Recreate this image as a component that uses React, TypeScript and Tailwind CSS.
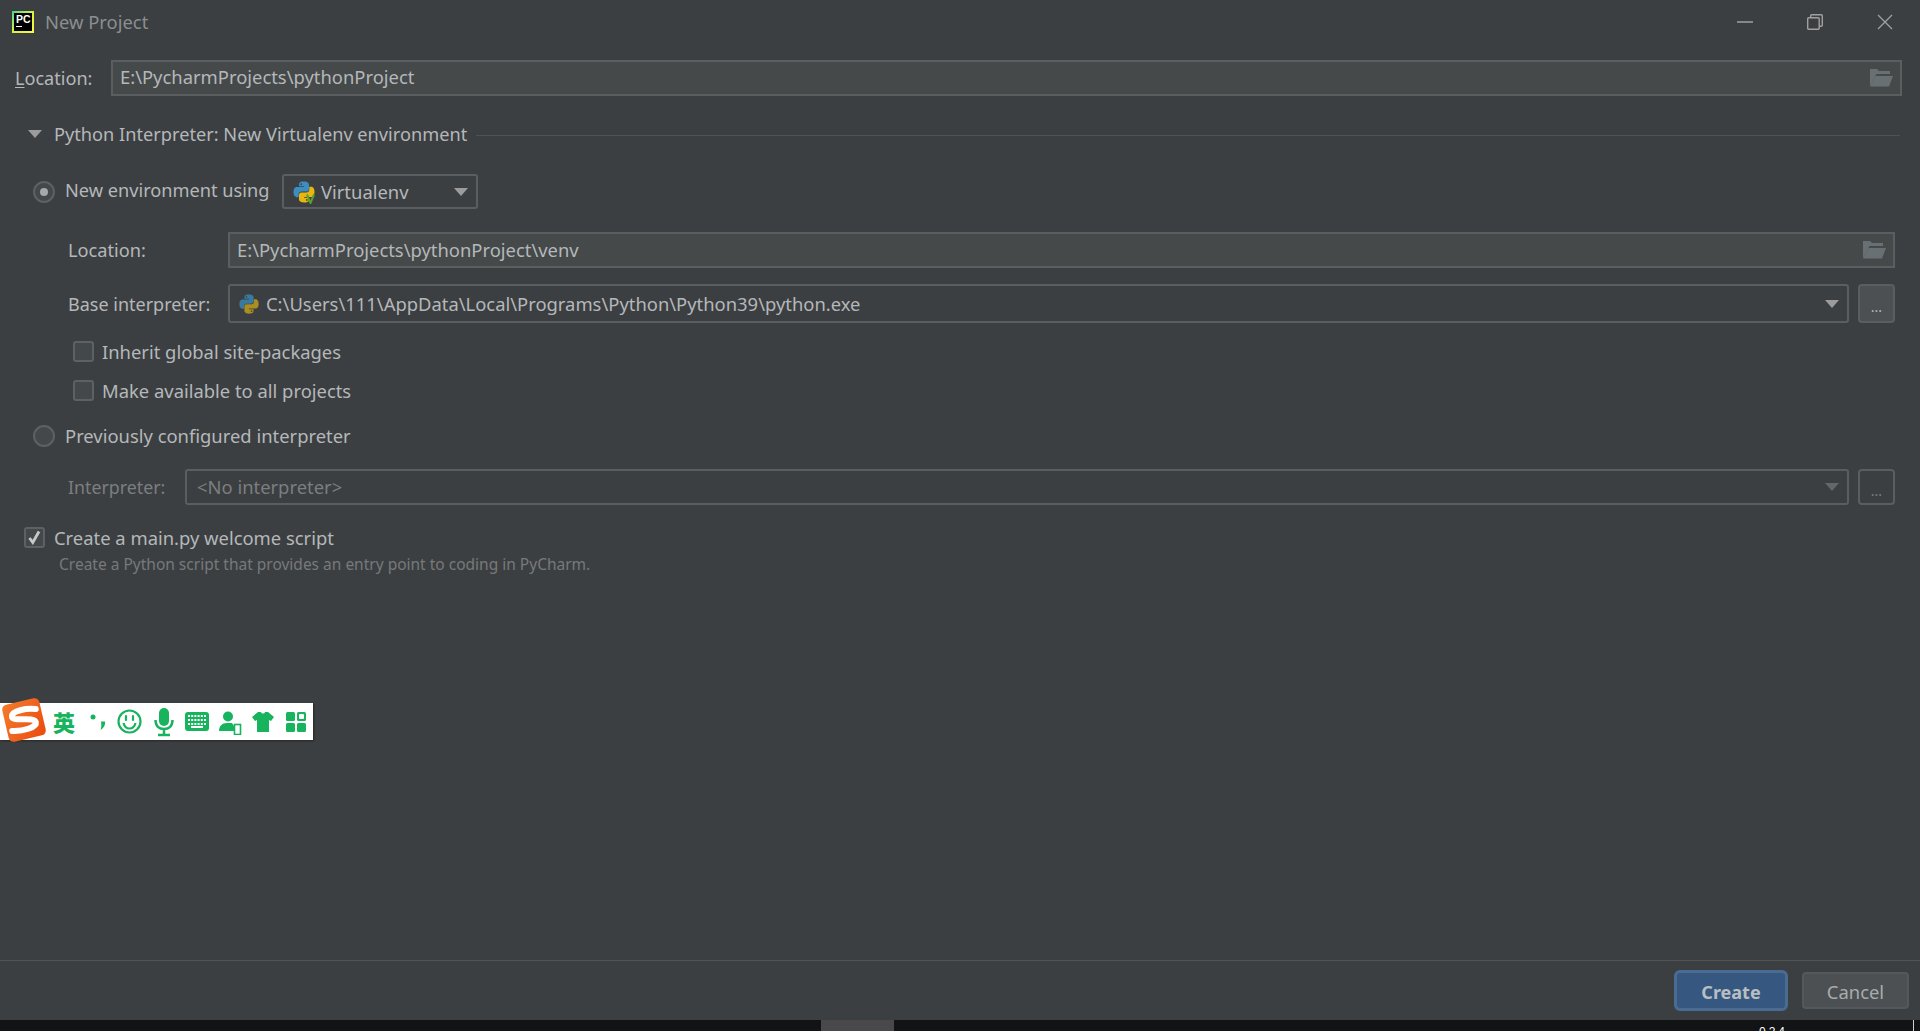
import React from "react";

const FONT = "font-['Noto_Sans','Open_Sans',sans-serif]";

function Folder() {
  return (
    <svg width="23" height="18" viewBox="0 0 23 18" className="shrink-0">
      <path d="M0 0h7l2 2h11v3H6.500L2 14 0 17z" fill="#687074" />
      <path d="M5.500 7H23l-4 10.500H0z" fill="#687074" />
    </svg>
  );
}

function Arrow({ color = "#9c9c9c" }: { color?: string }) {
  return (
    <svg width="14" height="8" viewBox="0 0 14 8" className="shrink-0">
      <path d="M0 0h14L7 8z" fill={color} />
    </svg>
  );
}

function PyIcon({ size, blue, yellow, v }: { size: number; blue: string; yellow: string; v?: boolean }) {
  const d =
    "M11.900 1.500C6.800 1.500 7.100 3.800 7.100 3.800v2.500h4.900V7H5.200S1.500 6.600 1.500 12s3.300 5.200 3.300 5.200h1.900v-2.600s-.1-3 2.800-3h4.800s2.700 0 2.700-2.600V4.400S17 1.500 11.900 1.500zM9.200 3.200a.9.9 0 110 1.800.9.9 0 010-1.800z";
  return (
    <svg width={size} height={size} viewBox="0 0 24 24" className="shrink-0">
      <path d={d} fill={blue} fillRule="evenodd" />
      <path d={d} fill={yellow} fillRule="evenodd" transform="rotate(180 12 12)" />
      {v && <path d="M15 14.500l3.500 8.500 3.500-8.500" fill="none" stroke="#5aa02c" strokeWidth="2" />}
    </svg>
  );
}

function CheckBox({ checked }: { checked?: boolean }) {
  return (
    <span className="flex h-[21px] w-[21px] shrink-0 items-center justify-center rounded-[3px] border-2 border-[#5d6163] bg-[#43494a]">
      {checked && (
        <svg width="15" height="15" viewBox="0 0 15 15">
          <path d="M2.500 8l3.300 4.500L12 1.500" fill="none" stroke="#c8c8c8" strokeWidth="2.800" />
        </svg>
      )}
    </span>
  );
}

function Radio({ on }: { on?: boolean }) {
  return (
    <span className="flex h-[22px] w-[22px] shrink-0 items-center justify-center rounded-full border-2 border-[#5d6163] bg-[#43494a]">
      {on && <span className="h-[8px] w-[8px] rounded-full bg-[#a8a8a8]" />}
    </span>
  );
}

function Sogou() {
  const g = "#17b35d";
  return (
    <div className="absolute left-0 top-[703px] flex h-[37px] w-[313px] items-center bg-white shadow-[1px_1px_2px_rgba(0,0,0,0.4)]">
      <div className="absolute left-[5px] top-[-2px] flex h-[38px] w-[38px] rotate-[-13deg] items-center justify-center rounded-[5px] bg-gradient-to-br from-[#f47a2c] to-[#ea4a0c]">
        <svg width="34" height="28" viewBox="0 0 34 28">
          <path d="M31 6C22 3 7 2 6 8c-1 6 22 4 22 11 0 5-15 6-25 3" fill="none" stroke="#fff" strokeWidth="6" strokeLinecap="round" />
        </svg>
      </div>
      <span className="absolute left-[53px] top-[3px] font-['Noto_Sans_CJK_SC',sans-serif] text-[22px] font-black leading-[30px] text-[#17b35d]">英</span>
      <svg className="absolute left-[90px] top-[10px]" width="18" height="18" viewBox="0 0 18 18">
        <circle cx="3" cy="4" r="2.500" fill={g} />
        <path d="M11 8.500h4c.5 3.500-1 6.500-4.500 8.500 1-2.500 1-5 .5-8.500z" fill={g} />
      </svg>
      <svg className="absolute left-[117px] top-[6px]" width="25" height="25" viewBox="0 0 25 25" fill="none" stroke={g} strokeWidth="2.200">
        <circle cx="12.500" cy="12.500" r="11" />
        <path d="M9 7v4M16 7v4" strokeLinecap="round" />
        <path d="M6.500 14c1 4 3 5.500 6 5.500s5-1.500 6-5.500" />
      </svg>
      <svg className="absolute left-[154px] top-[4px]" width="20" height="30" viewBox="0 0 20 30" fill="none" stroke={g}>
        <rect x="5" y="1" width="10" height="18" rx="5" fill={g} stroke="none" />
        <path d="M1.500 13c0 6 3.500 9 8.500 9s8.500-3 8.500-9M10 22v6M4 28h12" strokeWidth="2.500" />
      </svg>
      <svg className="absolute left-[185px] top-[9px]" width="24" height="19" viewBox="0 0 24 19">
        <rect width="24" height="19" rx="3" fill={g} />
        <path d="M3 4h18M3 8h18M3 12h18" stroke="#fff" strokeWidth="2" strokeDasharray="2 1.200" />
        <rect x="6" y="14" width="12" height="2" fill="#fff" />
      </svg>
      <svg className="absolute left-[219px] top-[8px]" width="24" height="24" viewBox="0 0 24 24">
        <circle cx="9" cy="5.500" r="5" fill={g} />
        <path d="M0 20c0-5 3-8 8-8h5l2 3v5z" fill={g} />
        <rect x="15.500" y="13.500" width="6" height="10" fill="#fff" stroke={g} strokeWidth="1.600" />
      </svg>
      <svg className="absolute left-[252px] top-[9px]" width="22" height="20" viewBox="0 0 22 20">
        <path d="M6 0h3c.5 2 3.500 2 4 0h3l6 5-3 4-2-1v12H5V8L3 9 0 5z" fill={g} />
      </svg>
      <svg className="absolute left-[286px] top-[9px]" width="20" height="20" viewBox="0 0 20 20">
        <rect width="9" height="9" rx="1.500" fill={g} />
        <rect x="11" width="9" height="9" rx="1.500" fill={g} />
        <rect x="13" y="2" width="5" height="5" rx="1" fill="#fff" />
        <rect y="11" width="9" height="9" rx="1.500" fill={g} />
        <rect x="11" y="11" width="9" height="9" rx="1.500" fill={g} />
      </svg>
    </div>
  );
}

export default function App() {
  return (
    <div className={`relative flex h-[1031px] w-[1920px] flex-col overflow-hidden bg-[#3c3f41] text-[18.4px] text-[#b4b8ba] ${FONT}`}>
      {/* title bar */}
      <div className="flex h-[44px] shrink-0 items-center pl-[12px] pr-[27px]">
        <div className="h-[22px] w-[22px] shrink-0 bg-gradient-to-br from-[#21d789] via-[#d8f03a] to-[#fcf84a] p-[2px]">
          <div className="flex h-full w-full flex-col bg-black px-[2px] pt-[1px]">
            <span className="font-['Liberation_Sans',sans-serif] text-[10.500px] font-bold leading-[10px] text-white">PC</span>
            <span className="mt-[2px] h-[1px] w-[6px] bg-white" />
          </div>
        </div>
        <span className="ml-[11px] text-[#8b8e90]">New Project</span>
        <div className="ml-auto flex items-center gap-[54px] pb-[1px]">
          <svg width="16" height="16" viewBox="0 0 16 16"><path d="M0 8h16" stroke="#a0a0a0" strokeWidth="1.500" /></svg>
          <svg width="16" height="16" viewBox="0 0 16 16" fill="none" stroke="#a0a0a0" strokeWidth="1.400"><rect x=".7" y="3.700" width="11.500" height="11.500" rx="1" /><path d="M3.700 3.500V1.700a1 1 0 011-1h9.600a1 1 0 011 1v9.600a1 1 0 01-1 1h-2" /></svg>
          <svg width="16" height="16" viewBox="0 0 16 16"><path d="M1 1l14 14M15 1L1 15" stroke="#a0a0a0" strokeWidth="1.300" /></svg>
        </div>
      </div>

      {/* location */}
      <div className="mt-[16px] flex h-[36px] shrink-0 items-center pl-[15px] pr-[18px]">
        <span className="w-[96px] shrink-0 pt-[2px] text-[18.100px]"><span className="underline underline-offset-2">L</span>ocation:</span>
        <div className="flex h-full flex-1 items-center justify-between border-2 border-[#5b5e60] bg-[#45494a] pl-[7px] pr-[7px]">
          <span className="pb-[2px]">E:\PycharmProjects\pythonProject</span>
          <Folder />
        </div>
      </div>

      {/* section */}
      <div className="mt-[23px] flex h-[30px] shrink-0 items-center pl-[28px] pr-[20px]">
        <Arrow />
        <span className="ml-[12px] shrink-0 pt-[1px] text-[18.200px]">Python Interpreter: New Virtualenv environment</span>
        <div className="ml-[9px] mt-[2px] h-px flex-1 bg-[#505355]" />
      </div>

      {/* new env */}
      <div className="mt-[25px] flex h-[35px] shrink-0 items-center pl-[33px]">
        <Radio on />
        <span className="ml-[10px] w-[217px] shrink-0 pb-[1px] text-[18.200px]">New environment using</span>
        <div className="flex h-full w-[196px] items-center rounded-[3px] border-2 border-[#5b5e60] pl-[8px] pr-[8px]">
          <PyIcon size={24} blue="#3d8ec0" yellow="#e8b610" v />
          <span className="ml-[5px] flex-1 pt-[2px] leading-none">Virtualenv</span>
          <Arrow />
        </div>
      </div>

      <div className="mt-[23px] flex h-[36px] shrink-0 items-center pl-[68px] pr-[25px]">
        <span className="w-[160px] shrink-0 pt-[1px] text-[18.200px]">Location:</span>
        <div className="flex h-full flex-1 items-center justify-between border-2 border-[#5b5e60] bg-[#45494a] pl-[7px] pr-[7px]">
          <span>E:\PycharmProjects\pythonProject\venv</span>
          <Folder />
        </div>
      </div>

      <div className="mt-[16px] flex h-[39px] shrink-0 items-center pl-[68px] pr-[25px]">
        <span className="w-[160px] shrink-0 pt-[1px] text-[18px]">Base interpreter:</span>
        <div className="flex h-full flex-1 items-center rounded-[3px] border-2 border-[#5b5e60] pl-[8px] pr-[8px]">
          <PyIcon size={22} blue="#3a7a9e" yellow="#a98f22" />
          <span className="ml-[6px] flex-1 pt-[1px]">C:\Users\111\AppData\Local\Programs\Python\Python39\python.exe</span>
          <Arrow />
        </div>
        <div className="ml-[9px] flex h-full w-[37px] shrink-0 items-end justify-center rounded-[4px] border-2 border-[#5b5e60] bg-[#4c5052] pb-[7px] text-[14px] leading-[14px] text-[#b4b8ba]">...</div>
      </div>

      <div className="mt-[18px] flex h-[21px] shrink-0 items-center pl-[73px]">
        <CheckBox />
        <span className="ml-[8px]">Inherit global site-packages</span>
      </div>
      <div className="mt-[18px] flex h-[21px] shrink-0 items-center pl-[73px]">
        <CheckBox />
        <span className="ml-[8px]">Make available to all projects</span>
      </div>

      <div className="mt-[24px] flex h-[22px] shrink-0 items-center pl-[33px]">
        <Radio />
        <span className="ml-[10px]">Previously configured interpreter</span>
      </div>

      <div className="mt-[22px] flex h-[36px] shrink-0 items-center pl-[68px] pr-[25px]">
        <span className="w-[117px] shrink-0 text-[17.800px] text-[#7b7e80]">Interpreter:</span>
        <div className="flex h-full flex-1 items-center rounded-[3px] border-2 border-[#5b5e60] pl-[10px] pr-[8px] text-[#7b7e80]">
          <span className="flex-1">&lt;No interpreter&gt;</span>
          <Arrow color="#646668" />
        </div>
        <div className="ml-[9px] flex h-full w-[37px] shrink-0 items-end justify-center rounded-[4px] border-2 border-[#5b5e60] pb-[5px] text-[14px] leading-[14px] text-[#7b7e80]">...</div>
      </div>

      <div className="mt-[22px] flex h-[21px] shrink-0 items-center pl-[24px]">
        <CheckBox checked />
        <span className="ml-[9px]">Create a main.py welcome script</span>
      </div>
      <div className="mt-[6px] h-[20px] shrink-0 pl-[59px] text-[15.500px] leading-[20px] text-[#77797b]">
        Create a Python script that provides an entry point to coding in PyCharm.
      </div>

      <div className="flex-1" />

      {/* footer */}
      <div className="flex h-[60px] shrink-0 items-center justify-end gap-[14px] border-t border-[#515355] pr-[11px]">
        <button className="h-[41px] w-[114px] rounded-[6px] border-[3px] border-[#4a6c92] bg-[#365880] pt-[3px] text-[18px] font-bold text-[#b9bec2]">Create</button>
        <button className="h-[37px] w-[107px] rounded-[4px] border-2 border-[#55585a] bg-[#4c5052] pt-[3px] text-[#a8acae]">Cancel</button>
      </div>

      {/* taskbar strip */}
      <div className="relative flex h-[11px] shrink-0 items-start overflow-hidden bg-[#111315]">
        <div className="ml-[821px] h-full w-[73px] bg-[#49494b]" />
        <span className="absolute left-[1759px] top-[5px] font-['Liberation_Sans',sans-serif] text-[12px] leading-[14px] tracking-[3px] text-white">024</span>
        <div className="absolute left-[1913px] top-0 h-full w-px bg-[#cfcfcf]" />
      </div>

      <Sogou />
    </div>
  );
}
